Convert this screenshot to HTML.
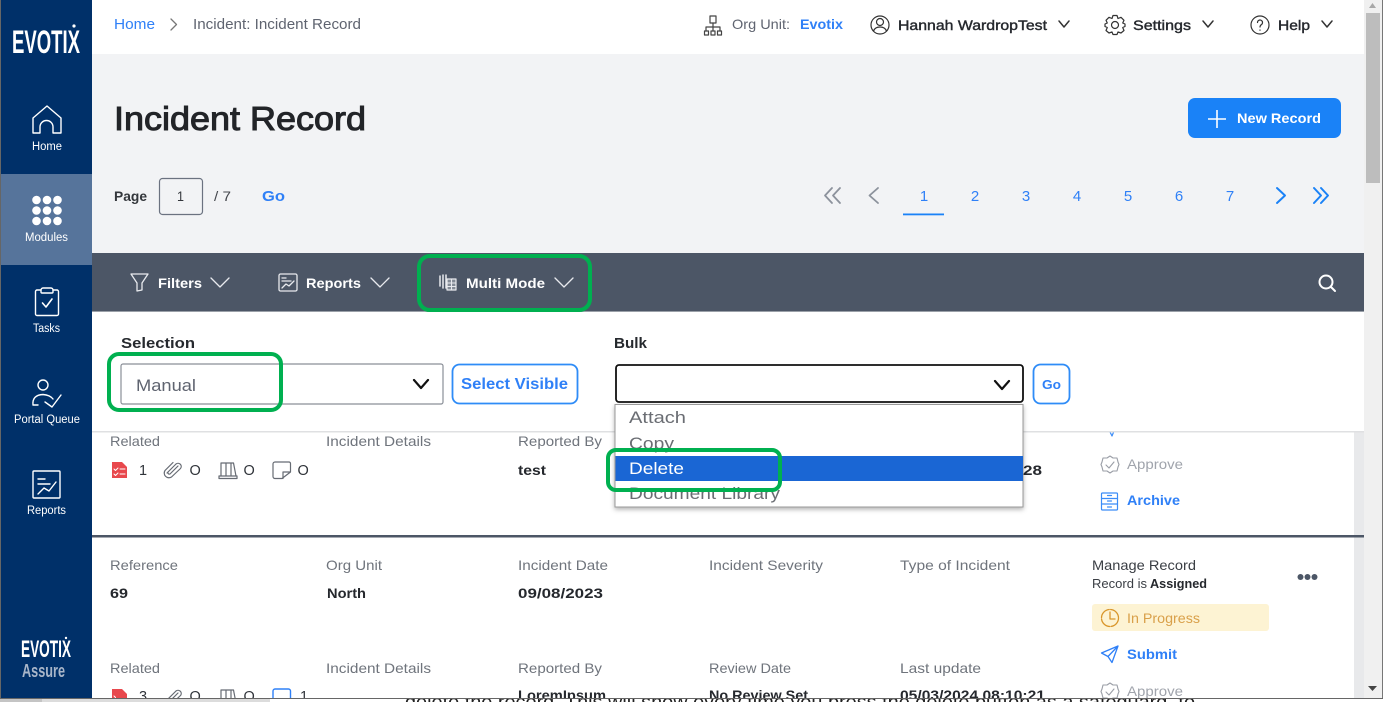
<!DOCTYPE html>
<html><head><meta charset="utf-8"><title>Incident Record</title>
<style>
html,body{margin:0;padding:0;background:#fff;overflow:hidden}
svg{display:block;font-size:14px}
text{font-family:"Liberation Sans",sans-serif}
.l{fill:#6f747c;font-size:14px}
.v{fill:#25282d;font-size:14px;font-weight:bold}
.b{fill:#2f80f7;font-weight:bold}
.w{fill:#fff;font-weight:bold}
.s{fill:#fff;font-size:11.5px}
.ic{fill:none;stroke-linecap:round;stroke-linejoin:round}
</style></head><body>
<svg xmlns="http://www.w3.org/2000/svg" width="1387" height="702" viewBox="0 0 1387 702">
<defs>
<clipPath id="c"><rect x="0" y="0" width="1382" height="698"/></clipPath>
<clipPath id="d"><rect x="0" y="698" width="1387" height="4"/></clipPath>
<clipPath id="copy"><rect x="615" y="405" width="408" height="51"/></clipPath>
<clipPath id="doc"><rect x="615" y="481" width="408" height="26"/></clipPath>
<filter id="sh" x="-5%" y="-10%" width="110%" height="125%"><feDropShadow dx="0" dy="2" stdDeviation="2.5" flood-color="#000" flood-opacity=".3"/></filter>
</defs>
<rect width="1387" height="702" fill="#fff"/>
<text clip-path="url(#d)" x="405" y="708" textLength="790" lengthAdjust="spacingAndGlyphs" fill="#222" style="font-size:18px">delete the record. This will show every time you press the delete button as a safeguard, to</text>
<rect x="0" y="699" width="42" height="3" fill="#c4c4c4"/>
<rect x="42" y="699" width="228" height="3" fill="#dcdcdc"/>
<g clip-path="url(#c)">
<rect x="1" width="1381" height="698" fill="#fff"/>
<rect x="92" y="54" width="1272" height="200" fill="#f2f3f5"/>
<rect x="1354" y="432" width="10" height="266" fill="#e8e9eb"/>
<!-- scrollbar -->
<rect x="1364" width="18" height="698" fill="#f0f0f0"/>
<rect x="1366" y="13" width="14" height="170" fill="#bdbdbd"/>
<path d="M1369 8 1372.500 3 1376 8Z" fill="#a8a8a8"/>
<path d="M1368 686H1377L1372.500 691Z" fill="#444"/>
<!-- sidebar -->
<rect x="1" width="91" height="698" fill="#003069"/>
<rect x="1" y="174" width="91" height="91" fill="#56749b"/>
<text x="12" y="53" textLength="68" lengthAdjust="spacingAndGlyphs" fill="#fff" font-weight="bold" style="font-size:32px">EVOTIX</text>
<circle cx="74" cy="26" r="1.600" fill="#fff"/>
<g class="ic" stroke="#fff" stroke-width="1.400">
<path d="M33 133V118L47 106L61 118V133H53V127a6.500 6.500 0 0 0-13 0V133Z"/>
<path d="M41 290H37a1.500 1.500 0 0 0-1.500 1.500V314a1.500 1.500 0 0 0 1.500 1.500H57a1.500 1.500 0 0 0 1.500-1.500V291.500a1.500 1.500 0 0 0-1.500-1.500H53"/>
<path d="M41 292V290a2 2 0 0 1 2-2H51a2 2 0 0 1 2 2V292a1 1 0 0 1-1 1H42a1 1 0 0 1-1-1Z"/>
<path d="M42.500 303 46 307 52 299" stroke-width="1.600"/>
<circle cx="43" cy="385" r="5"/>
<path d="M33 405Q32 395 43 394.500Q50 395 53 399M33 405H38"/>
<path d="M45 402 52 407 61 395"/>
<rect x="33" y="471" width="27" height="27" rx="1"/>
<path d="M38 479H45M38 484H50M38 494 44 488 49 491 56 482"/>
</g>
<g fill="#fff">
<circle cx="36.500" cy="200" r="4.300"/><circle cx="47" cy="200" r="4.300"/><circle cx="57.500" cy="200" r="4.300"/>
<circle cx="36.500" cy="210.500" r="4.300"/><circle cx="47" cy="210.500" r="4.300"/><circle cx="57.500" cy="210.500" r="4.300"/>
<circle cx="36.500" cy="221" r="4.300"/><circle cx="47" cy="221" r="4.300"/><circle cx="57.500" cy="221" r="4.300"/>
</g>
<text class="s" x="32" y="150" textLength="30" lengthAdjust="spacingAndGlyphs">Home</text>
<text class="s" x="25" y="241" textLength="43" lengthAdjust="spacingAndGlyphs">Modules</text>
<text class="s" x="33" y="332" textLength="27" lengthAdjust="spacingAndGlyphs">Tasks</text>
<text class="s" x="14" y="423" textLength="66" lengthAdjust="spacingAndGlyphs">Portal Queue</text>
<text class="s" x="27" y="514" textLength="39" lengthAdjust="spacingAndGlyphs">Reports</text>
<text x="21" y="657" textLength="50" lengthAdjust="spacingAndGlyphs" fill="#fff" font-weight="bold" style="font-size:24px">EVOTIX</text>
<circle cx="66" cy="638" r="1.200" fill="#fff"/>
<text x="22" y="677" textLength="43" lengthAdjust="spacingAndGlyphs" fill="#a9b6c9" font-weight="bold" style="font-size:18px">Assure</text>
<!-- header -->
<text x="114" y="29" textLength="41" lengthAdjust="spacingAndGlyphs" fill="#2f80f7" style="font-size:14.500px">Home</text>
<path class="ic" stroke="#777" stroke-width="1.300" d="M171 19 176.500 24.500 171 30"/>
<text x="193" y="29" textLength="168" lengthAdjust="spacingAndGlyphs" fill="#5f6470" style="font-size:14.500px">Incident: Incident Record</text>
<g class="ic" stroke="#444" stroke-width="1.200">
<rect x="710" y="16" width="6" height="7"/><path d="M713 23V27M706 31V27H720V31"/>
<rect x="704.500" y="31" width="4" height="4"/><rect x="711" y="31" width="4" height="4"/><rect x="717.500" y="31" width="4" height="4"/><path d="M713 27V31"/>
</g>
<text x="732" y="29" textLength="58" lengthAdjust="spacingAndGlyphs" fill="#5f6470">Org Unit:</text>
<text x="800" y="29" textLength="43" lengthAdjust="spacingAndGlyphs" class="b">Evotix</text>
<g class="ic" stroke="#333" stroke-width="1.200">
<circle cx="880" cy="25" r="9"/><circle cx="880" cy="22" r="3.500"/><path d="M873.500 31Q875 27 880 27Q885 27 886.500 31"/>
<path d="M1059 21 1064 27 1069 21" stroke-width="1.500"/>
<circle cx="1115" cy="25" r="3.500"/>
<path d="M1113 15.500H1117L1118 18.500 1121 17.300 1124 20.300 1122.700 23 1125 24V26.500L1122.700 27.500 1124 30.500 1121 33 1118 32 1117 34.500H1113L1112 32 1109 33 1106 30.500 1107.300 27.500 1105 26.500V24L1107.300 23 1106 20.300 1109 17.300 1112 18.500Z"/>
<path d="M1203 21 1208 27 1213 21" stroke-width="1.500"/>
<circle cx="1260" cy="25" r="9"/>
<path d="M1257.500 22.500a2.500 2.500 0 1 1 4 2c-1 .7-1.500 1.200-1.500 2.500M1260 30V30.300"/>
<path d="M1322 21 1327 27 1332 21" stroke-width="1.500"/>
</g>
<text x="898" y="30" textLength="149" lengthAdjust="spacingAndGlyphs" fill="#26292e" stroke="#26292e" stroke-width=".4">Hannah WardropTest</text>
<text x="1133" y="30" textLength="58" lengthAdjust="spacingAndGlyphs" fill="#26292e" stroke="#26292e" stroke-width=".4">Settings</text>
<text x="1278" y="30" textLength="32" lengthAdjust="spacingAndGlyphs" fill="#26292e" stroke="#26292e" stroke-width=".4">Help</text>
<!-- title -->
<text x="114" y="130" textLength="252" lengthAdjust="spacingAndGlyphs" fill="#222428" stroke="#222428" stroke-width="1" style="font-size:33px">Incident Record</text>
<rect x="1188" y="98" width="153" height="40" rx="7" fill="#1a82f7"/>
<path stroke="#fff" stroke-width="1.600" d="M1208 119H1226M1217 110V128"/>
<text x="1237" y="123" textLength="84" lengthAdjust="spacingAndGlyphs" class="w">New Record</text>
<text x="114" y="201" textLength="33" lengthAdjust="spacingAndGlyphs" fill="#33363b" font-weight="bold">Page</text>
<rect x="159.500" y="178.500" width="43" height="36" rx="3" fill="none" stroke="#6b7280" stroke-width="1.200"/>
<text x="177" y="201" textLength="7" lengthAdjust="spacingAndGlyphs" fill="#33363b">1</text>
<text x="214" y="201" textLength="17" lengthAdjust="spacingAndGlyphs" fill="#44474d">/ 7</text>
<text x="262" y="201" textLength="23" lengthAdjust="spacingAndGlyphs" class="b" style="font-size:15px">Go</text>
<g class="ic" stroke="#8c929c" stroke-width="1.800">
<path d="M832 188 825 195.500 832 203M840 188 833 195.500 840 203"/>
<path d="M878 188 869.500 195.500 878 203"/>
</g>
<g class="ic" stroke="#1a82f7" stroke-width="2">
<path d="M1277 188 1285 195.500 1277 203"/>
<path d="M1314 188 1321 195.500 1314 203M1321 188 1328 195.500 1321 203"/>
</g>
<g fill="#2f80f7" text-anchor="middle" style="font-size:15px">
<text x="924" y="201">1</text><text x="975" y="201">2</text><text x="1026" y="201">3</text><text x="1077" y="201">4</text><text x="1128" y="201">5</text><text x="1179" y="201">6</text><text x="1230" y="201">7</text>
</g>
<rect x="903" y="213.500" width="41" height="1.800" fill="#1a82f7"/>
<!-- toolbar -->
<rect x="92" y="253" width="1272" height="58" fill="#4c5666"/>
<rect x="92" y="311" width="1272" height="1" fill="#9aa0a8"/>
<g class="ic" stroke="#e8eaee" stroke-width="1.300">
<path d="M131 274H148L142 283V290L137 291V283Z"/>
<path d="M211 278 220 287 229 278M371 278 380 287 389 278M555 278 564 287 573 278"/>
<rect x="279" y="274" width="18" height="17" rx="1.500"/>
<path d="M282 278H286M282 281H291M282 288 286 284 289 286 294 281"/>
<path d="M440 276V286M443 275V288M446 275V288" stroke-width="1.500"/>
<rect x="447" y="279" width="9" height="11" fill="#e8eaee" fill-opacity=".35" stroke-width="1.200"/><path d="M447 283H456M447 286.500H456M451.500 279V290" stroke-width="1.100"/>
<circle cx="1326" cy="282" r="6.500" stroke="#fff" stroke-width="2"/><path d="M1331 287 1335 291" stroke="#fff" stroke-width="2"/>
</g>
<text x="158" y="288" textLength="44" lengthAdjust="spacingAndGlyphs" class="w">Filters</text>
<text x="306" y="288" textLength="55" lengthAdjust="spacingAndGlyphs" class="w">Reports</text>
<text x="466" y="288" textLength="79" lengthAdjust="spacingAndGlyphs" class="w">Multi Mode</text>
<!-- row1 + row2 -->
<text class="l" x="110" y="446" textLength="50" lengthAdjust="spacingAndGlyphs">Related</text>
<text class="l" x="326" y="446" textLength="105" lengthAdjust="spacingAndGlyphs">Incident Details</text>
<text class="l" x="518" y="446" textLength="84" lengthAdjust="spacingAndGlyphs">Reported By</text>
<path d="M112 462H122L127 467V478H112Z" fill="#e8484d"/>
<path class="ic" stroke="#fff" stroke-width="1" d="M114 469 115.500 470.500 118 468M120 469H125M114 474 115.500 475.500 118 473M120 474H125"/>
<g class="ic" stroke="#666b73" stroke-width="1.200">
<path d="M167 473 176 464a3.200 3.200 0 0 1 4.500 4.500L171.500 477a4.700 4.700 0 0 1-6.500-6.500L173 462.500M178 466 170 474a1.500 1.500 0 0 1-2-2L175 465"/>
<path d="M221 476V463H226V476M226 463H231V476M231 463 233.500 463 236 476M219 476H237V478.500H219Z"/>
<path d="M273 464a2 2 0 0 1 2-2H289a1.500 1.500 0 0 1 1.500 1.500V472L282 478.500H275a2 2 0 0 1-2-2ZM290.500 472H283V478.500"/>
</g>
<g fill="#30343a" style="font-size:14.500px">
<text x="139" y="475">1</text><text x="189.500" y="475">O</text><text x="243.500" y="475">O</text><text x="297.500" y="475">O</text>
</g>
<text class="v" x="518" y="475" textLength="28" lengthAdjust="spacingAndGlyphs">test</text>
<text class="v" x="1023" y="475" textLength="19" lengthAdjust="spacingAndGlyphs">28</text>
<path class="ic" stroke="#3b8cf7" stroke-width="1.200" d="M1110 432 1112 436 1114 431"/>
<g class="ic" stroke="#9a9ea6" stroke-width="1.100">
<path d="M1110 456 1113 458 1117 458 1118 462 1119 464.500 1118 467 1117 471 1113 471 1110 473 1107 471 1103 471 1102 467 1101 464.500 1102 462 1103 458 1107 458Z"/>
<path d="M1106 465 1109 468 1114 462"/>
</g>
<text x="1127" y="469" textLength="56" lengthAdjust="spacingAndGlyphs" fill="#a0a4ac">Approve</text>
<g class="ic" stroke="#3b8cf7" stroke-width="1.200">
<rect x="1101.500" y="493" width="16" height="17" rx="1"/><path d="M1101.500 498.500H1117.500M1101.500 504H1117.500M1107.500 495.500H1111.500M1107.500 501H1111.500M1107.500 507H1111.500"/>
</g>
<text x="1127" y="505" textLength="53" lengthAdjust="spacingAndGlyphs" class="b">Archive</text>
<rect x="92" y="535" width="1272" height="2.500" fill="#4c5666"/>
<text class="l" x="110" y="570" textLength="68" lengthAdjust="spacingAndGlyphs">Reference</text>
<text class="l" x="326" y="570" textLength="56" lengthAdjust="spacingAndGlyphs">Org Unit</text>
<text class="l" x="518" y="570" textLength="90" lengthAdjust="spacingAndGlyphs">Incident Date</text>
<text class="l" x="709" y="570" textLength="114" lengthAdjust="spacingAndGlyphs">Incident Severity</text>
<text class="l" x="900" y="570" textLength="110" lengthAdjust="spacingAndGlyphs">Type of Incident</text>
<text x="1092" y="570" textLength="104" lengthAdjust="spacingAndGlyphs" fill="#3a3e44">Manage Record</text>
<text x="1092" y="588" textLength="55" lengthAdjust="spacingAndGlyphs" fill="#3a3e44" style="font-size:13px">Record is</text>
<text x="1150" y="588" textLength="57" lengthAdjust="spacingAndGlyphs" fill="#25282d" font-weight="bold" style="font-size:13px">Assigned</text>
<circle cx="1300.500" cy="577" r="3" fill="#4c5666"/><circle cx="1307.500" cy="577" r="3" fill="#4c5666"/><circle cx="1314.500" cy="577" r="3" fill="#4c5666"/>
<text class="v" x="110" y="598" textLength="18" lengthAdjust="spacingAndGlyphs">69</text>
<text class="v" x="327" y="598" textLength="39" lengthAdjust="spacingAndGlyphs">North</text>
<text class="v" x="518" y="598" textLength="85" lengthAdjust="spacingAndGlyphs">09/08/2023</text>
<rect x="1092" y="604" width="177" height="27" rx="3" fill="#fdf3d3"/>
<g class="ic" stroke="#d9962b" stroke-width="1.300">
<circle cx="1110" cy="618" r="8.500" stroke-dasharray="12 1.500"/><path d="M1110 612V619H1115"/>
</g>
<text x="1127" y="623" textLength="73" lengthAdjust="spacingAndGlyphs" fill="#d9a04a">In Progress</text>
<path class="ic" stroke="#2f80f7" stroke-width="1.300" d="M1118 646 1101.500 653 1108 656.500 1112 662.500ZM1108 656.500 1118 646"/>
<text x="1127" y="659" textLength="50" lengthAdjust="spacingAndGlyphs" class="b">Submit</text>
<text class="l" x="110" y="673" textLength="50" lengthAdjust="spacingAndGlyphs">Related</text>
<text class="l" x="326" y="673" textLength="105" lengthAdjust="spacingAndGlyphs">Incident Details</text>
<text class="l" x="518" y="673" textLength="84" lengthAdjust="spacingAndGlyphs">Reported By</text>
<text class="l" x="709" y="673" textLength="82" lengthAdjust="spacingAndGlyphs">Review Date</text>
<text class="l" x="900" y="673" textLength="81" lengthAdjust="spacingAndGlyphs">Last update</text>
<path d="M112 689H122L127 694V705H112Z" fill="#e8484d"/>
<path class="ic" stroke="#fff" stroke-width="1" d="M114 696 115.500 697.500"/>
<g class="ic" stroke="#666b73" stroke-width="1.200">
<path d="M167 700 176 691a3.200 3.200 0 0 1 4.500 4.500L171.500 704M178 693 170 701a1.500 1.500 0 0 1-2-2L175 692"/>
<path d="M221 703V690H226V703M226 690H231V703M231 690 233.500 690 236 703"/>
</g>
<rect x="273" y="689" width="17.500" height="16" rx="2" fill="none" stroke="#2f80f7" stroke-width="1.400"/>
<g fill="#30343a" style="font-size:14.500px">
<text x="139" y="701">3</text><text x="189.500" y="701">O</text><text x="243.500" y="701">O</text><text x="300" y="701">1</text>
</g>
<text class="v" x="518" y="700" textLength="88" lengthAdjust="spacingAndGlyphs">LoremIpsum</text>
<text class="v" x="709" y="700" textLength="99" lengthAdjust="spacingAndGlyphs">No Review Set</text>
<text class="v" x="900" y="700" textLength="145" lengthAdjust="spacingAndGlyphs">05/03/2024 08:10:21</text>
<g class="ic" stroke="#9a9ea6" stroke-width="1.100">
<path d="M1110 683 1113 685 1117 685 1118 689 1119 691.500 1118 694 1117 698 1113 698 1110 700 1107 698 1103 698 1102 694 1101 691.500 1102 689 1103 685 1107 685Z"/>
<path d="M1106 692 1109 695 1114 689"/>
</g>
<text x="1127" y="696" textLength="56" lengthAdjust="spacingAndGlyphs" fill="#a0a4ac">Approve</text>
<!-- selection panel -->
<rect x="92" y="312" width="1272" height="119" fill="#fff"/>
<rect x="92" y="431" width="1272" height="1.500" fill="#dfe0e2"/>
<text x="121" y="348" textLength="74" lengthAdjust="spacingAndGlyphs" fill="#26292e" font-weight="bold" style="font-size:15px">Selection</text>
<rect x="121" y="364" width="322" height="40" rx="2" fill="#fff" stroke="#8a8f98" stroke-width="1.200"/>
<text x="136" y="391" textLength="60" lengthAdjust="spacingAndGlyphs" fill="#5f6470" style="font-size:17px">Manual</text>
<path class="ic" stroke="#111" stroke-width="2.200" d="M414 380 421 388 428 380"/>
<rect x="452.500" y="364.500" width="125" height="39" rx="7" fill="#fff" stroke="#2f8cf7" stroke-width="1.800"/>
<text x="461" y="389" textLength="107" lengthAdjust="spacingAndGlyphs" class="b" style="font-size:15.500px">Select Visible</text>
<text x="614" y="348" textLength="33" lengthAdjust="spacingAndGlyphs" fill="#26292e" font-weight="bold" style="font-size:15px">Bulk</text>
<rect x="616" y="365" width="407" height="37" rx="3" fill="#fff" stroke="#111" stroke-width="1.800"/>
<path class="ic" stroke="#111" stroke-width="2.200" d="M995 381 1002 389 1009 381"/>
<rect x="1033.500" y="364.500" width="36" height="39" rx="7" fill="#fff" stroke="#2f8cf7" stroke-width="1.800"/>
<text x="1042" y="389" textLength="19" lengthAdjust="spacingAndGlyphs" class="b" style="font-size:13px">Go</text>
<!-- dropdown -->
<rect x="615" y="404.500" width="408" height="102.500" fill="#fff" stroke="#9a9a9a" stroke-width="1" filter="url(#sh)"/>
<g fill="#6a6d73" style="font-size:17px">
<text x="629" y="423" textLength="57" lengthAdjust="spacingAndGlyphs">Attach</text>
<text x="629" y="449" textLength="45" lengthAdjust="spacingAndGlyphs" clip-path="url(#copy)">Copy</text>
<text x="629" y="499" textLength="151" lengthAdjust="spacingAndGlyphs" clip-path="url(#doc)">Document Library</text>
</g>
<rect x="615.500" y="456" width="407.500" height="25" fill="#1a66d4"/>
<text x="629" y="474" textLength="55" lengthAdjust="spacingAndGlyphs" fill="#fff" style="font-size:17px">Delete</text>
<!-- green highlights -->
<g fill="none" stroke="#00b050" stroke-width="4">
<rect x="419" y="256" width="171" height="54" rx="11"/>
<rect x="109" y="354" width="172" height="56" rx="10"/>
<rect x="608" y="450" width="172" height="40" rx="8"/>
</g>
</g>
<!-- window edges -->
<rect x="0" y="0" width="1" height="698" fill="#666"/>
<rect x="0" y="698" width="1383" height="1" fill="#666"/>
<rect x="1382" y="0" width="1" height="698" fill="#777"/>
</svg>
</body></html>
